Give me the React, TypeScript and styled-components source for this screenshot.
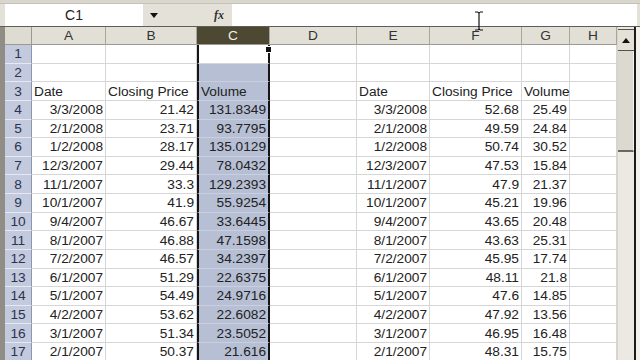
import styled, {createGlobalStyle} from "styled-components";

const GlobalStyle = createGlobalStyle`
  body {
    margin: 0;
    background: #ece9d8;
    font-family: "Liberation Sans", Arial, sans-serif;
  }
`
const Page = styled.div`
  width: 640px;
  height: 360px;
  overflow: hidden;
  position: relative;
  background: #ece9d8;
`
const TopStrip = styled.div`
  height: 4px;
  background: #d9d7cd;
  border-bottom: 1px solid #c4c2b8;
  box-sizing: border-box;
`
const FormulaBar = styled.div`
  height: 22px;
  display: flex;
  align-items: stretch;
  padding: 0 3px 0 5px;
  background: #e4e2d8;
  border-bottom: 1px solid #5e5d58;
`
const NameBox = styled.div`
  width: 138px;
  background: #fff;
  display: flex;
  align-items: center;
  justify-content: center;
  font-size: 14px;
  color: #222;
`
const DropButton = styled.div`
  width: 22px;
  display: flex;
  align-items: center;
  justify-content: center;
  background: #e4e2d8;
`
const FxButton = styled.div`
  width: 67px;
  display: flex;
  align-items: center;
  justify-content: flex-end;
  padding-right: 8px;
  box-sizing: border-box;
  font-family: "Liberation Serif", serif;
  font-style: italic;
  font-weight: bold;
  font-size: 12px;
  color: #333;
`
const FormulaInput = styled.div`
  flex: 1;
  background: #fff;
`
const Body = styled.div`
  display: flex;
  padding-left: 5px;
  background: #8f8d86;
`
const Sheet = styled.div`
  display: grid;
  grid-template-columns: 27px 74px 91px 73px 87px 73px 92px 48px 47px;
  grid-template-rows: 18px;
  grid-auto-rows: 18.625px;
  background: #fff;
  font-size: 13.7px;
  color: #222;
`
const Corner = styled.div`
  background: #dedcd2;
  border-right: 1px solid #9c9a90;
  border-bottom: 1px solid #9c9a90;
`
const ColHead = styled.div<{ $sel?: boolean }>`
  display: flex;
  align-items: center;
  justify-content: center;
  background: ${p => p.$sel ? '#4d4831' : '#e2e0d6'};
  color: ${p => p.$sel ? '#f4f2ea' : '#333'};
  border-right: 1px solid #a9a79c;
  border-bottom: 1px solid #9c9a90;
  box-sizing: border-box;
`
const RowHead = styled.div`
  display: flex;
  align-items: center;
  justify-content: center;
  background: #c3cadd;
  color: #2b3350;
  border-right: 1px solid #8d96b0;
  border-bottom: 1px solid #e6e9f1;
  box-sizing: border-box;
`
const Cell = styled.div<{ $sel?: boolean; $active?: boolean; $left?: boolean }>`
  position: relative;
  display: flex;
  align-items: center;
  justify-content: ${p => p.$left ? 'flex-start' : 'flex-end'};
  padding: 0 2px;
  white-space: nowrap;
  box-sizing: border-box;
  background: ${p => p.$sel && !p.$active ? '#b7bfd5' : 'transparent'};
  border-right: ${p => p.$sel ? '2px solid #151515' : '1px solid #d6d6d6'};
  border-left: ${p => p.$sel ? '2px solid #151515' : 'none'};
  border-bottom: 1px solid ${p => p.$sel && !p.$active ? '#c9cfdf' : '#d6d6d6'};
`
const FillHandle = styled.span`
  position: absolute;
  top: 1px;
  right: -4px;
  width: 5px;
  height: 5px;
  background: #111;
  border: 1px solid #fff;
`
const ScrollBar = styled.div`
  width: 18px;
  display: flex;
  flex-direction: column;
  background: #ebe9e1;
  border-left: 1px solid #d5d3ca;
  padding-top: 2px;
`
const ScrollButton = styled.div`
  height: 20px;
  display: flex;
  align-items: center;
  justify-content: center;
  background: #e3e1d8;
  border-top: 1px solid #55534c;
  border-bottom: 1px solid #55534c;
`
const Thumb = styled.div`
  height: 99px;
  background: #dcdad0;
  border-bottom: 2px solid #6a6860;
  border-right: 1px solid #f4f3ee;
`
const Frame = styled.div`
  width: 5px;
  background: #f2f1ec;
  border-left: 2px solid #1c1c1c;
`
const Cursor = styled.svg`
  position: absolute;
  left: 474px;
  top: 11px;
`

const cols = ['A', 'B', 'C', 'D', 'E', 'F', 'G', 'H']

const left: [string, string, string][] = [
    ['3/3/2008', '21.42', '131.8349'],
    ['2/1/2008', '23.71', '93.7795'],
    ['1/2/2008', '28.17', '135.0129'],
    ['12/3/2007', '29.44', '78.0432'],
    ['11/1/2007', '33.3', '129.2393'],
    ['10/1/2007', '41.9', '55.9254'],
    ['9/4/2007', '46.67', '33.6445'],
    ['8/1/2007', '46.88', '47.1598'],
    ['7/2/2007', '46.57', '34.2397'],
    ['6/1/2007', '51.29', '22.6375'],
    ['5/1/2007', '54.49', '24.9716'],
    ['4/2/2007', '53.62', '22.6082'],
    ['3/1/2007', '51.34', '23.5052'],
    ['2/1/2007', '50.37', '21.616'],
]
const right: [string, string, string][] = [
    ['3/3/2008', '52.68', '25.49'],
    ['2/1/2008', '49.59', '24.84'],
    ['1/2/2008', '50.74', '30.52'],
    ['12/3/2007', '47.53', '15.84'],
    ['11/1/2007', '47.9', '21.37'],
    ['10/1/2007', '45.21', '19.96'],
    ['9/4/2007', '43.65', '20.48'],
    ['8/1/2007', '43.63', '25.31'],
    ['7/2/2007', '45.95', '17.74'],
    ['6/1/2007', '48.11', '21.8'],
    ['5/1/2007', '47.6', '14.85'],
    ['4/2/2007', '47.92', '13.56'],
    ['3/1/2007', '46.95', '16.48'],
    ['2/1/2007', '48.31', '15.75'],
]
const titles = ['Date', 'Closing Price', 'Volume']

const rowValues = (row: number): string[] => {
    if (row === 3) return [...titles, '', ...titles, '']
    if (row >= 4) {
        const l = left[row - 4]
        const r = right[row - 4]
        return [...l, '', ...r, '']
    }
    return ['', '', '', '', '', '', '', '']
}

const App = () => {
    const rows = Array.from({length: 17}, (_, i) => i + 1)
    return (
        <Page>
            <GlobalStyle/>
            <TopStrip/>
            <FormulaBar>
                <NameBox>C1</NameBox>
                <DropButton>
                    <svg width="8" height="5" viewBox="0 0 8 5">
                        <path d="M0 0 H8 L4 5 Z" fill="#111"/>
                    </svg>
                </DropButton>
                <FxButton>fx</FxButton>
                <FormulaInput/>
            </FormulaBar>
            <Body>
                <Sheet>
                    <Corner/>
                    {cols.map(c => <ColHead key={c} $sel={c === 'C'}>{c}</ColHead>)}
                    {rows.map(row => {
                        const values = rowValues(row)
                        return [
                            <RowHead key={'h' + row}>{row}</RowHead>,
                            ...values.map((v, i) => (
                                <Cell key={row + cols[i]}
                                      $sel={i === 2}
                                      $active={i === 2 && row === 1}
                                      $left={row === 3}
                                >
                                    {v}
                                    {i === 2 && row === 1 && <FillHandle/>}
                                </Cell>
                            ))
                        ]
                    })}
                </Sheet>
                <ScrollBar>
                    <ScrollButton>
                        <svg width="8" height="5" viewBox="0 0 8 5">
                            <path d="M0 5 H8 L4 0 Z" fill="#111"/>
                        </svg>
                    </ScrollButton>
                    <Thumb/>
                </ScrollBar>
                <Frame/>
            </Body>
            <Cursor width="10" height="20" viewBox="0 0 10 20">
                <path d="M1 1 H4 M6 1 H9 M5 1.5 V18.5 M1 19 H4 M6 19 H9 M3 1 Q5 1 5 2.5 Q5 1 7 1 M3 19 Q5 19 5 17.5 Q5 19 7 19"
                      stroke="#111" strokeWidth="1.2" fill="none"/>
            </Cursor>
        </Page>
    )
}

export default App
